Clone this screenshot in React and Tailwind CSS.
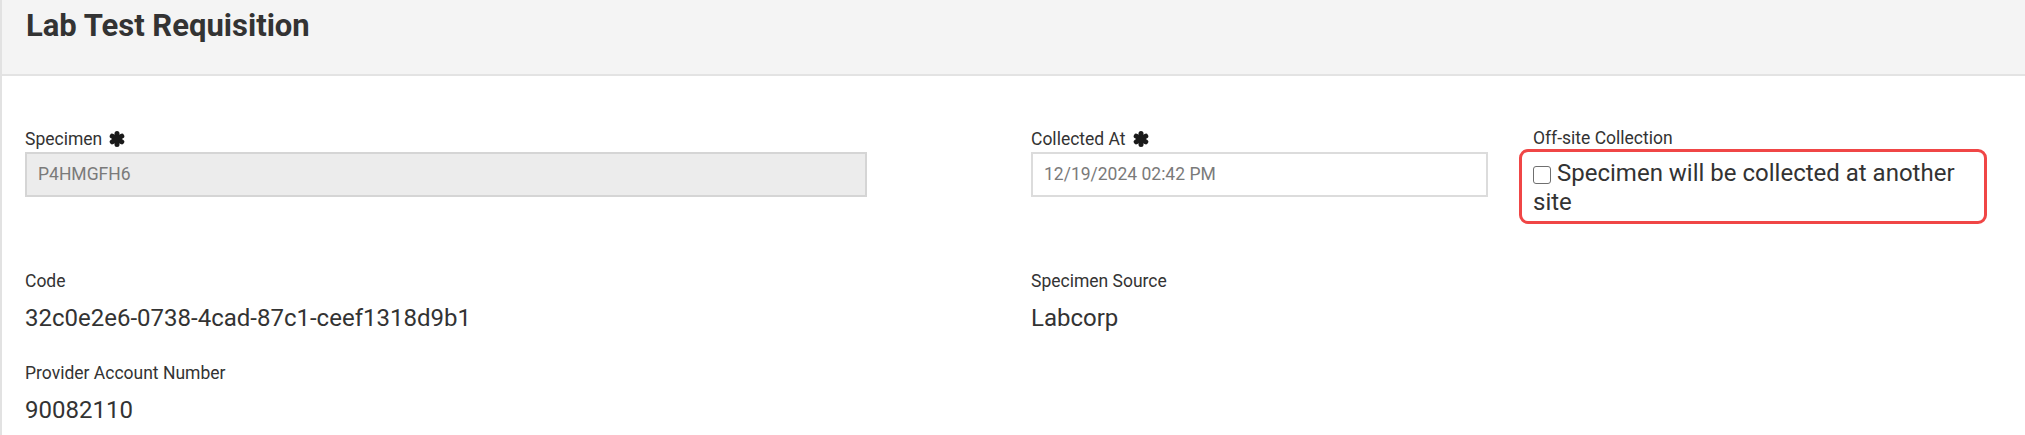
import React from "react";

function Asterisk() {
  return (
    <svg viewBox="0 0 16 16" className="ml-[7px] w-[16px] h-[16px]" aria-hidden="true">
      <g stroke="#1a1a1a" strokeWidth="5" strokeLinecap="round">
        <line x1="8" y1="2.5" x2="8" y2="13.5" />
        <line x1="3.2" y1="5.2" x2="12.8" y2="10.8" />
        <line x1="3.2" y1="10.8" x2="12.8" y2="5.2" />
      </g>
    </svg>
  );
}

function Label({ children, required }) {
  return (
    <div className="flex items-center text-[17.5px] leading-[24px] text-[#333]">
      <span>{children}</span>
      {required && <Asterisk />}
    </div>
  );
}

function Value({ children }) {
  return <div className="mt-[11px] text-[24px] leading-[29px] text-[#333]">{children}</div>;
}

export default function App() {
  return (
    <div
      className="min-h-[435px] bg-white border-l-2 border-[#e2e2e2]"
      style={{ fontFamily: "Roboto, 'Liberation Sans', sans-serif" }}
    >
      <div className="h-[76px] bg-[#f4f4f4] border-b-2 border-[#e3e3e3] pl-[24px] pt-[8px]">
        <h1 className="text-[31px] leading-[36px] font-bold text-[#333]">Lab Test Requisition</h1>
      </div>

      <div className="pl-[23px] pt-[51px]">
        <div className="grid grid-cols-[1006px_502px_1fr]">
          <div>
            <Label required>Specimen</Label>
            <div className="mt-px w-[842px] h-[45px] flex items-center px-[11px] bg-[#ececec] border-2 border-[#d5d5d5] text-[17.5px] text-[#7a7a7a]">
              P4HMGFH6
            </div>
          </div>
          <div>
            <Label required>Collected At</Label>
            <div className="mt-px w-[457px] h-[45px] flex items-center px-[11px] bg-white border-2 border-[#dcdcdc] text-[17.5px] text-[#7a7a7a]">
              12/19/2024 02:42 PM
            </div>
          </div>
          <div>
            <div className="-mt-px">
              <Label>Off-site Collection</Label>
            </div>
            <div className="-ml-[14px] mt-[-1px] w-[468px] border-[3px] border-[#f04646] rounded-[9px] pl-[11px] pr-[8px] pt-[7px] pb-[4px]">
              <div className="text-[24px] leading-[29px] text-[#333]">
                <span className="inline-block w-[18px] h-[18px] align-[-3px] mr-[6px] border-[1.5px] border-[#6f6f6f] rounded-[3px] bg-white"></span>
                Specimen will be collected at another site
              </div>
            </div>
          </div>
        </div>

        <div className="grid grid-cols-[1006px_502px_1fr] mt-[45px]">
          <div>
            <Label>Code</Label>
            <Value>32c0e2e6-0738-4cad-87c1-ceef1318d9b1</Value>
            <div className="mt-[28px]">
              <Label>Provider Account Number</Label>
              <Value>90082110</Value>
            </div>
          </div>
          <div>
            <Label>Specimen Source</Label>
            <Value>Labcorp</Value>
          </div>
          <div></div>
        </div>
      </div>
    </div>
  );
}
